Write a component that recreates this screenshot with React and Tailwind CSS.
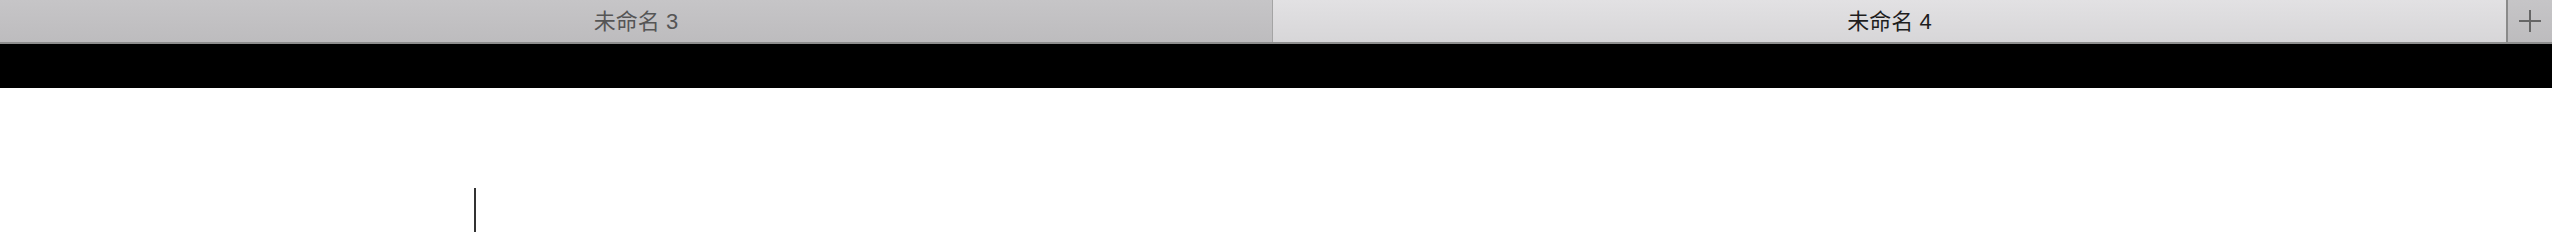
import React from "react";

const App = () => {
  return (
    <div className="w-[2552px] h-[242px] bg-white overflow-hidden font-['Liberation_Sans','Noto_Sans_CJK_SC',sans-serif]">
      {/* tab bar */}
      <div className="flex h-[44px] border-b-2 border-[#8e8e8e]">
        <div className="w-[1273px] flex items-center justify-center bg-gradient-to-b from-[#c6c5c7] to-[#bdbcbe] text-[#555555] text-[22px] border-r border-[#a4a4a4]">
          未命名 3
        </div>
        <div className="flex-1 flex items-center justify-center bg-gradient-to-b from-[#e2e1e3] to-[#d7d6d8] text-[#1e1e1e] text-[22px]">
          未命名 4
        </div>
        <div className="w-[46px] flex items-center justify-center bg-gradient-to-b from-[#c6c5c7] to-[#bdbcbe] border-l-2 border-[#8a8a8a]">
          <svg width="22" height="22" viewBox="0 0 22 22">
            <path d="M11 0V22M0 11H22" stroke="#666666" strokeWidth="2" />
          </svg>
        </div>
      </div>

      {/* toolbar strip */}
      <div className="h-[44px] bg-black" />

      {/* editor */}
      <div className="pl-[474px] pt-[100px]">
        <div className="w-[2px] h-[44px] bg-[#333333]" />
      </div>
    </div>
  );
};

export default App;
